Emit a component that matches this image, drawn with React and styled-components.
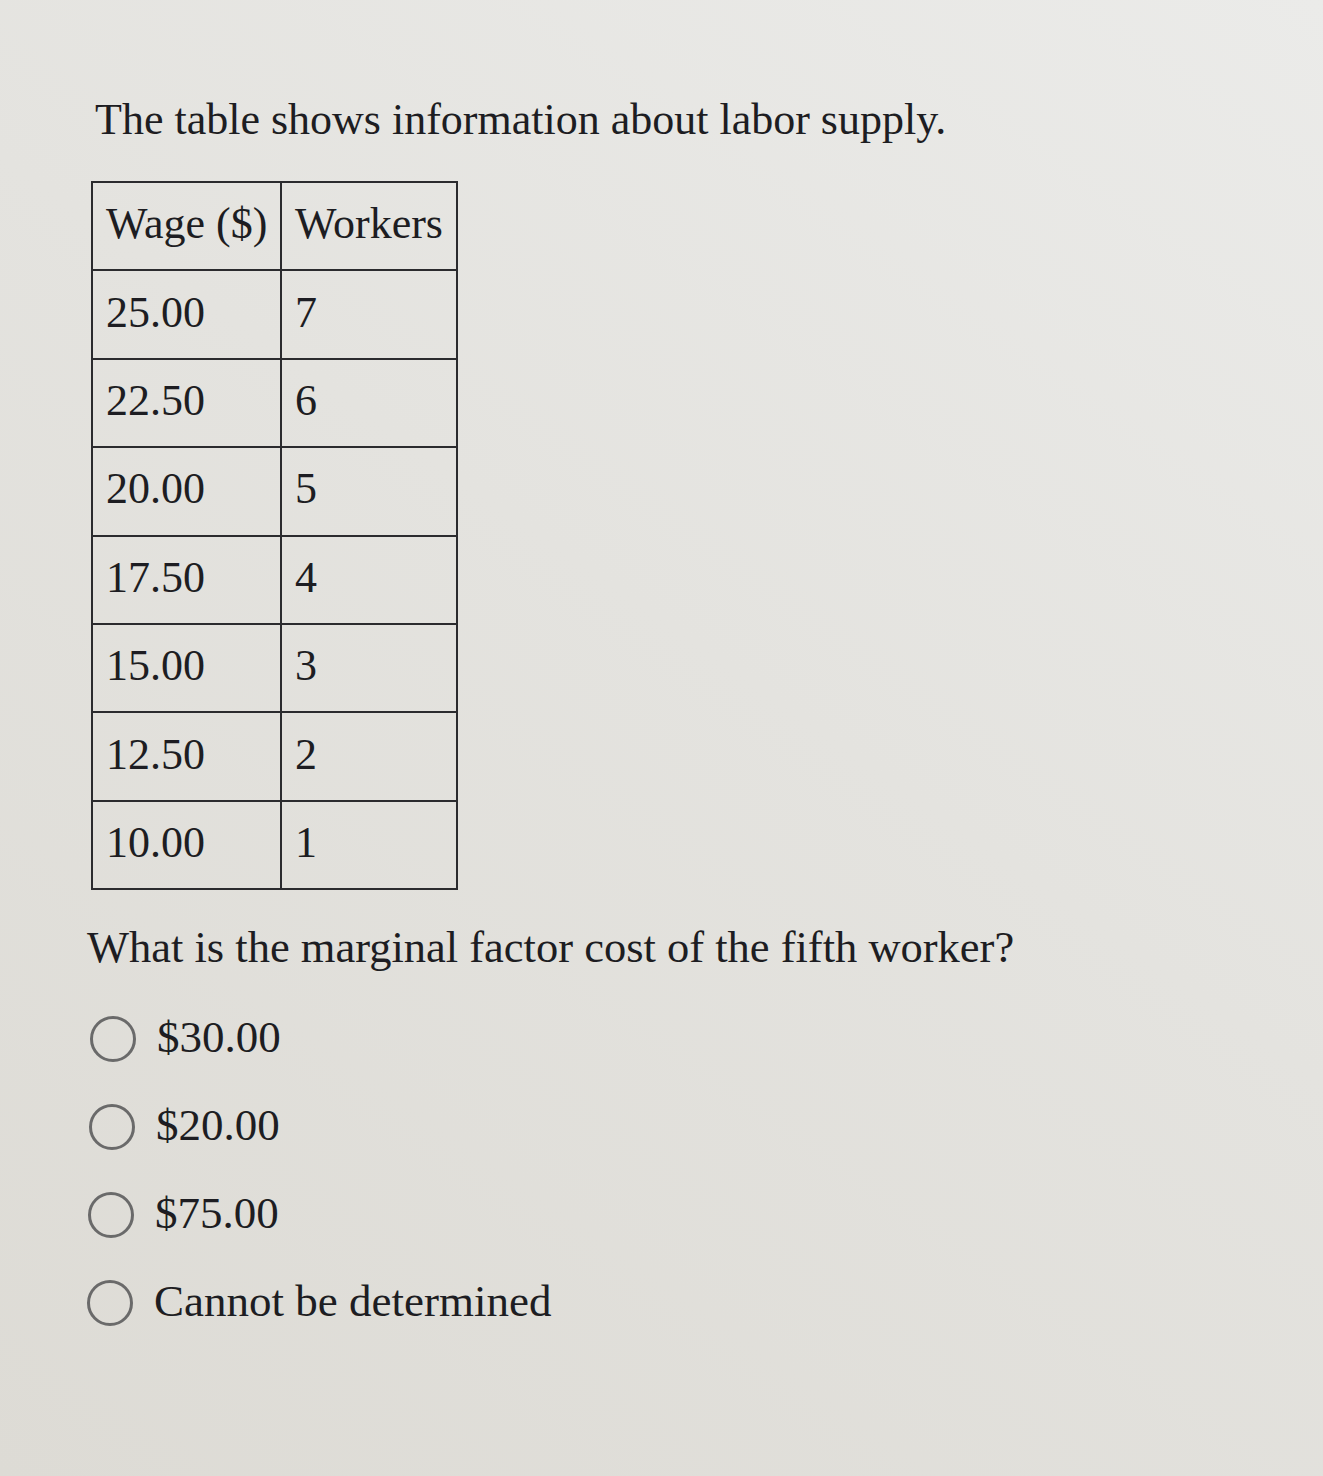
import React from 'react'
import styled, { createGlobalStyle } from 'styled-components'

const rows = [
    ['25.00', '7'],
    ['22.50', '6'],
    ['20.00', '5'],
    ['17.50', '4'],
    ['15.00', '3'],
    ['12.50', '2'],
    ['10.00', '1'],
]

const options = ['$30.00', '$20.00', '$75.00', 'Cannot be determined']

const GlobalStyle = createGlobalStyle`
    html, body {
        margin: 0;
        padding: 0;
    }
    body {
        min-height: 1476px;
        background: linear-gradient(215deg, #ebebe9 0%, #e4e3df 45%, #dddbd5 100%);
        font-family: "Liberation Serif", "Times New Roman", serif;
        color: #1d1d22;
    }
`

const Page = styled.main`
    padding: 98px 0 0 91px;
    display: flex;
    flex-direction: column;
    align-items: flex-start;
`

const Title = styled.h1`
    margin: 0 0 39px 4px;
    font-size: 44px;
    line-height: 44px;
    font-weight: normal;
`

const Table = styled.table`
    border-collapse: collapse;
    font-size: 44px;
    line-height: 44px;

    td, th {
        border: 2px solid #2b2b2e;
        height: 82.4px;
        padding: 0 0 4px 13px;
        text-align: left;
        font-weight: normal;
        vertical-align: middle;
    }

    td:first-child, th:first-child {
        width: 174px;
    }

    td:last-child, th:last-child {
        width: 161px;
    }
`

const Question = styled.p`
    margin: 35px 0 26px -4px;
    font-size: 44.5px;
    line-height: 44px;
`

const OptionList = styled.ul`
    list-style: none;
    margin: 0;
    padding: 0;
    display: flex;
    flex-direction: column;
`

const Option = styled.li`
    height: 88px;
    display: flex;
    align-items: center;
    gap: 21px;
    margin-left: ${p => p.$shift}px;
    font-size: 45px;
    line-height: 44px;
`

const Radio = styled.span`
    width: 40px;
    height: 40px;
    border-radius: 50%;
    border: 3px solid #6a6a6a;
    flex-shrink: 0;
`

const Label = styled.span`
    padding-bottom: 4px;
`

function App() {
    return (
        <>
            <GlobalStyle />
            <Page>
                <Title>The table shows information about labor supply.</Title>
                <Table>
                    <thead>
                        <tr>
                            <th>Wage ($)</th>
                            <th>Workers</th>
                        </tr>
                    </thead>
                    <tbody>
                        {rows.map(([wage, workers]) => (
                            <tr key={wage}>
                                <td>{wage}</td>
                                <td>{workers}</td>
                            </tr>
                        ))}
                    </tbody>
                </Table>
                <Question>What is the marginal factor cost of the fifth worker?</Question>
                <OptionList>
                    {options.map((opt, i) => (
                        <Option key={opt} $shift={-1 - i}>
                            <Radio />
                            <Label>{opt}</Label>
                        </Option>
                    ))}
                </OptionList>
            </Page>
        </>
    )
}

export default App
